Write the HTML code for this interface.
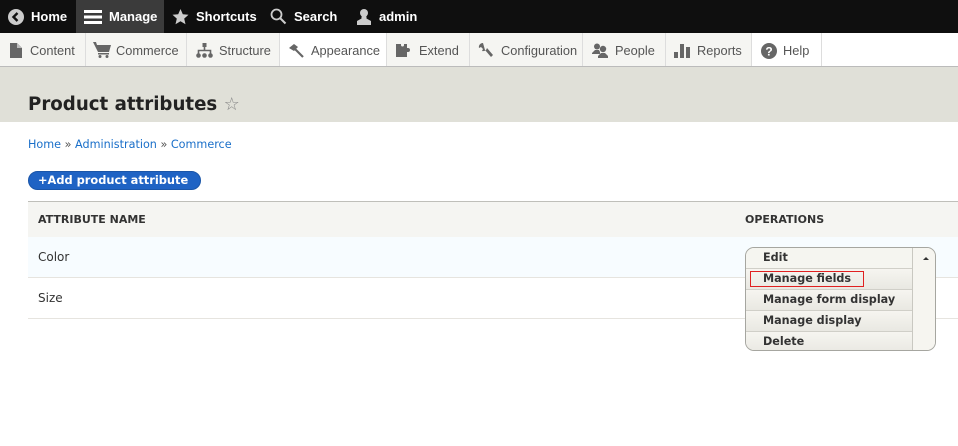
<!DOCTYPE html>
<html><head><meta charset="utf-8"><style>
*{box-sizing:border-box;margin:0;padding:0}
body{width:958px;height:446px;overflow:hidden;background:#fff;font-family:"DejaVu Sans","Liberation Sans",sans-serif;position:relative}
.bar{position:absolute;left:0;top:0;width:958px;height:33px;background:#0f0f0f;font-family:"Liberation Sans",sans-serif;font-weight:bold;font-size:13px;color:#fff}
.bar .it{position:absolute;top:0;height:33px;display:flex;align-items:center}
.bar svg{margin-right:7px}
.tray{position:absolute;left:0;top:33px;width:958px;height:34px;background:#fff;border-bottom:1px solid #bbb;box-shadow:0 1px 2px rgba(0,0,0,.3)}
.tray .t{position:absolute;top:0;height:33px;background:#f5f5f2;border-right:1px solid #ddd}
.tray .t.w{background:#fff}
.tray svg{position:absolute;top:10px}
.tray .l{position:absolute;top:10px;font-family:"Liberation Sans",Arial,sans-serif;font-size:12.8px;color:#555;white-space:nowrap;line-height:15px}
.hdr{position:absolute;left:0;top:67px;width:958px;height:55px;background:#e0e0d8}
h1{position:absolute;left:28px;top:94px;font-size:18.2px;font-weight:bold;color:#222;line-height:22px;white-space:nowrap}
.bc{position:absolute;left:28px;top:138px;font-size:11.2px;color:#1a6fc9;line-height:14px;white-space:nowrap}
.bc span{color:#555}
.btn{position:absolute;left:28px;top:171px;width:173px;height:19px;border-radius:10px;background:#1f63c4;border:1px solid #1a55a8;color:#fff;font-weight:bold;font-size:11.4px;line-height:17px;padding-left:9px;white-space:nowrap}
.th{position:absolute;left:28px;top:201px;width:930px;height:37px;background:#f5f5f2;border-top:1px solid #bfbfba;border-bottom:1px solid #dcdcd6;font-size:11px;font-weight:bold;color:#333}
.row{position:absolute;left:28px;width:930px;height:41px;border-bottom:1px solid #e6e4df;font-size:12px;color:#333}
.drop{position:absolute;left:745px;top:247px;width:191px;height:104px;border:1px solid #a6a6a0;border-radius:9px;background:#f2f1eb;overflow:hidden;font-size:11.2px;font-weight:bold;color:#333;white-space:nowrap}
.drop .o{position:absolute;left:0;width:166px;height:21px;border-bottom:1px solid #d0cfc8;padding-left:17px;line-height:20px;background:linear-gradient(#f6f5f0,#e9e8e2)}
.drop .o:first-child{background:#f5f5f0}
.drop .tog{position:absolute;left:166px;top:0;width:26px;height:104px;border-left:1px solid #c9c8c1;background:#f6f5f0}
</style></head><body>
<div class="bar">
 <div class="it" style="left:8px"><svg width="16" height="16" viewBox="0 0 16 16"><circle cx="8" cy="8" r="8" fill="#ccc"/><path d="M9.5 4L5.5 8l4 4" stroke="#111" stroke-width="2.4" fill="none"/></svg>Home</div>
 <div class="it" style="left:76px;width:88px;background:#3b3b3b;padding-left:8px"><svg width="18" height="16" viewBox="0 0 18 16"><rect y="1" width="18" height="3" fill="#fff"/><rect y="6.5" width="18" height="3" fill="#fff"/><rect y="12" width="18" height="3" fill="#fff"/></svg>Manage</div>
 <div class="it" style="left:172px"><svg width="17" height="16" viewBox="0 0 17 16"><path d="M8.5 0l2.3 5.3 5.7.5-4.3 3.8 1.3 5.6-5-3-5 3 1.3-5.6L.5 5.8l5.7-.5z" fill="#ccc"/></svg>Shortcuts</div>
 <div class="it" style="left:270px"><svg width="17" height="17" viewBox="0 0 17 17"><circle cx="6.5" cy="6.5" r="5" stroke="#ccc" stroke-width="1.8" fill="none"/><path d="M10 10l5.5 5.5" stroke="#ccc" stroke-width="2"/></svg>Search</div>
 <div class="it" style="left:356px"><svg width="16" height="17" viewBox="0 0 16 17"><circle cx="8" cy="5" r="4" fill="#ccc"/><path d="M5.5 8.5v2L1 13v4h14v-4l-4.5-2.5v-2z" fill="#ccc"/></svg>admin</div>
</div>
<div class="tray">
 <div class="t" style="left:0;width:86px"><svg style="left:10px" width="12" height="15" viewBox="0 0 12 15"><path d="M0 0h7l5 5v10H0z" fill="#666"/><path d="M7 0v5h5" fill="#bbb"/></svg><span class="l" style="left:30px">Content</span></div>
 <div class="t" style="left:86px;width:101px"><svg style="left:7px;top:8px" width="19" height="17" viewBox="0 0 19 17"><path d="M0 1h3l1 3h14l-2 7H5z" fill="#666"/><rect x="5" y="12" width="11" height="1.5" fill="#666"/><circle cx="7" cy="15.5" r="1.5" fill="#666"/><circle cx="14" cy="15.5" r="1.5" fill="#666"/></svg><span class="l" style="left:30px">Commerce</span></div>
 <div class="t" style="left:187px;width:93px"><svg style="left:9px" width="17" height="15" viewBox="0 0 17 15"><rect x="6.5" y="0" width="4" height="4" fill="#666"/><path d="M8.5 4v4M2.5 11V7.5h12V11" stroke="#666" stroke-width="1.6" fill="none"/><circle cx="2.5" cy="12.5" r="2.3" fill="#666"/><circle cx="8.5" cy="12.5" r="2.3" fill="#666"/><circle cx="14.5" cy="12.5" r="2.3" fill="#666"/></svg><span class="l" style="left:32px">Structure</span></div>
 <div class="t w" style="left:280px;width:107px"><svg style="left:8px" width="17" height="15" viewBox="0 0 17 15"><path d="M1 5l5-4 4 3-4 4z" fill="#666"/><path d="M7 6l8 8" stroke="#666" stroke-width="2.2"/></svg><span class="l" style="left:31px">Appearance</span></div>
 <div class="t" style="left:387px;width:83px"><svg style="left:9px" width="17" height="15" viewBox="0 0 17 15"><path d="M0 1h5v1a1.5 1.5 0 003 0V1h3v4h1a2 2 0 010 4h-1v5H0z" fill="#666"/></svg><span class="l" style="left:32px">Extend</span></div>
 <div class="t" style="left:470px;width:113px"><svg style="left:8px" width="17" height="15" viewBox="0 0 17 15"><path d="M5 0a4 4 0 00-4 5l2-1 1 1 1 1-1 2a4 4 0 005-3l6 7-2 2-6-7" fill="#666"/></svg><span class="l" style="left:31px">Configuration</span></div>
 <div class="t" style="left:583px;width:83px"><svg style="left:9px" width="17" height="15" viewBox="0 0 17 15"><circle cx="5" cy="3.5" r="3" fill="#666"/><path d="M0 10l3-3h4l1 2v2H0z" fill="#666"/><circle cx="11" cy="6" r="3.2" fill="#666"/><path d="M6 15v-2l3-3h4l3 3v2z" fill="#666"/></svg><span class="l" style="left:32px">People</span></div>
 <div class="t" style="left:666px;width:86px"><svg style="left:8px" width="16" height="15" viewBox="0 0 16 15"><rect x="0" y="9" width="4" height="6" fill="#666"/><rect x="6" y="1" width="4" height="14" fill="#666"/><rect x="12" y="4" width="4" height="11" fill="#666"/></svg><span class="l" style="left:31px">Reports</span></div>
 <div class="t w" style="left:752px;width:70px"><svg style="left:9px" width="16" height="16" viewBox="0 0 16 16"><circle cx="8" cy="8" r="8" fill="#666"/><text x="8" y="12.5" font-size="12" font-weight="bold" fill="#fff" text-anchor="middle" font-family="Liberation Sans">?</text></svg><span class="l" style="left:31px">Help</span></div>
</div>
<div class="hdr"></div>
<h1>Product attributes <span style="font-weight:normal;color:#888;font-size:18px">☆</span></h1>
<div class="bc">Home <span>»</span> Administration <span>»</span> Commerce</div>
<div class="btn">+Add product attribute</div>
<div class="th"><span style="position:absolute;left:10px;top:11px">ATTRIBUTE NAME</span><span style="position:absolute;left:717px;top:11px">OPERATIONS</span></div>
<div class="row" style="top:237px;background:#f7fcff"><span style="position:absolute;left:10px;top:13px">Color</span></div>
<div class="row" style="top:278px"><span style="position:absolute;left:10px;top:13px">Size</span></div>
<div class="drop">
 <div class="o" style="top:0">Edit</div>
 <div class="o" style="top:21px"><span style="position:absolute;left:4px;top:2px;width:114px;height:16px;border:1.5px solid #e02020"></span>Manage fields</div>
 <div class="o" style="top:42px">Manage form display</div>
 <div class="o" style="top:63px">Manage display</div>
 <div class="o" style="top:84px;border-bottom:none">Delete</div>
 <div class="tog"><svg width="26" height="20" viewBox="0 0 26 20" style="position:absolute;left:0;top:2px"><path d="M10 10h6l-3-3z" fill="#333"/></svg></div>
</div>
</body></html>
